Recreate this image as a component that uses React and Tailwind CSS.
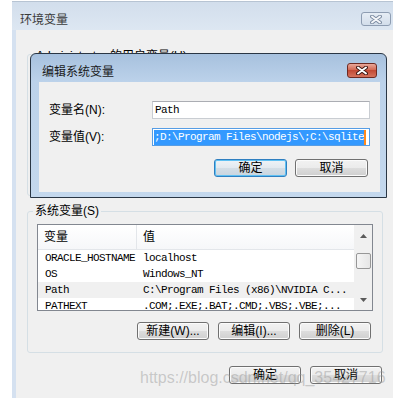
import React from 'react';

const sans = "font-['Liberation_Sans','Noto_Sans_CJK_SC',sans-serif]";
const mono = "font-['Liberation_Mono','Noto_Sans_CJK_SC',monospace]";

const rows = [
  ['ORACLE_HOSTNAME', 'localhost'],
  ['OS', 'Windows_NT'],
  ['Path', 'C:\\Program Files (x86)\\NVIDIA C...'],
  ['PATHEXT', '.COM;.EXE;.BAT;.CMD;.VBS;.VBE;...'],
];

function XGlyph({ red }) {
  return (
    <svg width="12" height="9" viewBox="0 0 12 9">
      <path d="M2 1.5 L10 7.5 M10 1.5 L2 7.5" stroke={red ? '#3b1410' : '#7a8aa0'} strokeWidth="3.8" strokeLinecap="round" />
      <path d="M2 1.5 L10 7.5 M10 1.5 L2 7.5" stroke={red ? '#ffffff' : '#f4f6f9'} strokeWidth="2" strokeLinecap="round" />
    </svg>
  );
}

function Btn({ children, def, w }) {
  return (
    <div
      className={`${w === 73 ? 'w-[73px]' : 'w-[72px]'} h-[18px] flex items-center justify-center rounded-[3px] border text-[12px] leading-none text-black ${sans} ${
        def
          ? 'border-[#2f7fc0] shadow-[inset_0_0_0_1px_#5fc1f3] bg-[linear-gradient(#eef3f7,#e2e9ef_50%,#d4dee6_50%,#c9d5df)]'
          : 'border-[#707070] shadow-[inset_0_0_0_1px_#fbfbfb] bg-[linear-gradient(#f2f2f2,#ebebeb_50%,#dddddd_50%,#cfcfcf)]'
      }`}
    >
      {children}
    </div>
  );
}

function Arrow({ up }) {
  return (
    <svg width="7" height="4" viewBox="0 0 7 4">
      <path d={up ? 'M0 4 L3.5 0 L7 4 Z' : 'M0 0 L3.5 4 L7 0 Z'} fill="#5a5a5a" />
    </svg>
  );
}

export default function App() {
  return (
    <div className="relative w-[393px] h-[398px] overflow-hidden bg-white">
      {/* 环境变量 window */}
      <div className="ml-[12px] mt-[1px] h-[397px] flex flex-col border-t border-[#b7c4d3] bg-[#d5e1f0]">
        <div className="h-[28px] flex items-start justify-between bg-[linear-gradient(#d2deec,#dde7f2)]">
          <div className={`ml-[8px] mt-[10px] text-[12px] leading-[16px] text-[#3a3a3a] ${sans}`}>环境变量</div>
          <div className="mt-[10px] mr-[2px] w-[30px] h-[14px] flex items-center justify-center rounded-[3px] border border-[#8e9db2] bg-[linear-gradient(#e6edf5,#d3deeb)]">
            <XGlyph />
          </div>
        </div>
        <div className="flex-1 ml-[4px] bg-[#f0f0f0] flex flex-col">
          <fieldset className="mt-[15px] ml-[11px] w-[356px] h-[151px] border border-[#d5dfe5] rounded-[3px]">
            <legend className={`ml-[6px] px-[2px] pt-[4px] text-[12px] leading-[14px] text-black ${sans}`}>Administrator 的用户变量(U)</legend>
          </fieldset>

          <fieldset className="mt-[8px] ml-[11px] w-[356px] h-[149px] border border-[#d5dfe5] rounded-[3px]">
            <legend className={`ml-[5px] px-[2px] text-[12px] leading-[14px] text-black ${sans}`}>系统变量(S)</legend>
            <div className="mt-[6px] ml-[9px] w-[336px] h-[87px] border border-[#828790] bg-white flex overflow-hidden">
              <div className="flex-1 flex flex-col">
                <div className={`h-[25px] shrink-0 flex border-b border-[#e3e6ea] bg-[linear-gradient(#ffffff,#f6f7f9)] text-[12px] text-black ${sans}`}>
                  <div className="w-[99px] pl-[6px] flex items-center border-r border-[#e3e6ea]">变量</div>
                  <div className="flex-1 pl-[6px] flex items-center">值</div>
                </div>
                {rows.map(([k, v]) => (
                  <div
                    key={k}
                    className={`h-[16px] shrink-0 flex text-[11px] leading-[16px] tracking-[-0.6px] text-black whitespace-nowrap ${mono} ${
                      k === 'Path' ? 'bg-[#f0f0f0]' : 'bg-white'
                    }`}
                  >
                    <div className="w-[99px] pl-[7px]">{k}</div>
                    <div className="flex-1 pl-[6px] overflow-hidden">{v}</div>
                  </div>
                ))}
              </div>
              <div className="w-[18px] shrink-0 bg-[#f0f0f0] flex flex-col items-center">
                <div className="h-[22px] flex items-center justify-center">
                  <Arrow up />
                </div>
                <div className="mt-[6px] w-[15px] h-[16px] rounded-[2px] border border-[#979797] bg-[linear-gradient(90deg,#f5f5f5,#e6e6e6)]" />
                <div className="flex-1" />
                <div className="h-[20px] flex items-center justify-center">
                  <Arrow />
                </div>
              </div>
            </div>
            <div className="mt-[11px] flex justify-end gap-[9px] pr-[11px]">
              <Btn>新建(W)...</Btn>
              <Btn>编辑(I)...</Btn>
              <Btn>删除(L)</Btn>
            </div>
          </fieldset>

          <div className="mt-[13px] flex justify-end gap-[9px] pr-[11px]">
            <Btn>确定</Btn>
            <Btn>取消</Btn>
          </div>
        </div>
      </div>

      {/* 编辑系统变量 dialog */}
      <div className="absolute left-[30px] top-[53px] w-[357px] h-[145px] flex flex-col border border-[#2a3644] rounded-t-[6px] bg-[linear-gradient(#a7c1de,#bcd2ea_28px,#c4d8ed)]">
        <div className="h-[28px] shrink-0 flex items-start justify-between">
          <div className={`ml-[11px] mt-[10px] text-[12px] leading-[16px] text-[#1a1a1a] ${sans}`}>编辑系统变量</div>
          <div className="mt-[9px] mr-[9px] w-[30px] h-[15px] flex items-center justify-center rounded-[3px] border border-[#6e2a22] bg-[linear-gradient(#e9a89a,#d0624c_50%,#c24a35_50%,#d5735d)]">
            <XGlyph red />
          </div>
        </div>
        <div className="flex-1 ml-[8px] mr-[6px] mb-[5px] bg-[#f0f0f0] flex flex-col">
          <div className="mt-[19px] flex items-center">
            <div className={`w-[113px] pl-[10px] text-[12px] leading-[18px] text-black ${sans}`}>变量名(N):</div>
            <div className={`w-[218px] h-[18px] flex items-center pl-[2px] border border-[#c9cdd2] border-t-[#abadb3] bg-white text-[11px] tracking-[-0.6px] text-black ${mono}`}>
              Path
            </div>
          </div>
          <div className="mt-[9px] flex items-center">
            <div className={`w-[113px] pl-[10px] text-[12px] leading-[18px] text-black ${sans}`}>变量值(V):</div>
            <div className={`w-[218px] h-[18px] flex items-center pl-[1px] border border-[#569de5] bg-white text-[11px] tracking-[-0.6px] whitespace-nowrap overflow-hidden ${mono}`}>
              <span className="h-[15px] leading-[15px] bg-[#3399ff] text-white">{';D:\\Program Files\\nodejs\\;C:\\sqlite'}</span>
              <span className="w-[2px] h-[15px] bg-[#ff8a1c]" />
            </div>
          </div>
          <div className="mt-[13px] flex justify-end gap-[8px] pr-[12px]">
            <Btn def w={73}>确定</Btn>
            <Btn w={73}>取消</Btn>
          </div>
        </div>
      </div>

      {/* watermark */}
      <div className="absolute left-[140px] top-[368px] text-[16px] leading-[20px] text-[rgba(150,150,150,0.45)] font-['Liberation_Sans',sans-serif] whitespace-nowrap">
        https://blog.csdn.net/qq_35427716
      </div>
    </div>
  );
}
